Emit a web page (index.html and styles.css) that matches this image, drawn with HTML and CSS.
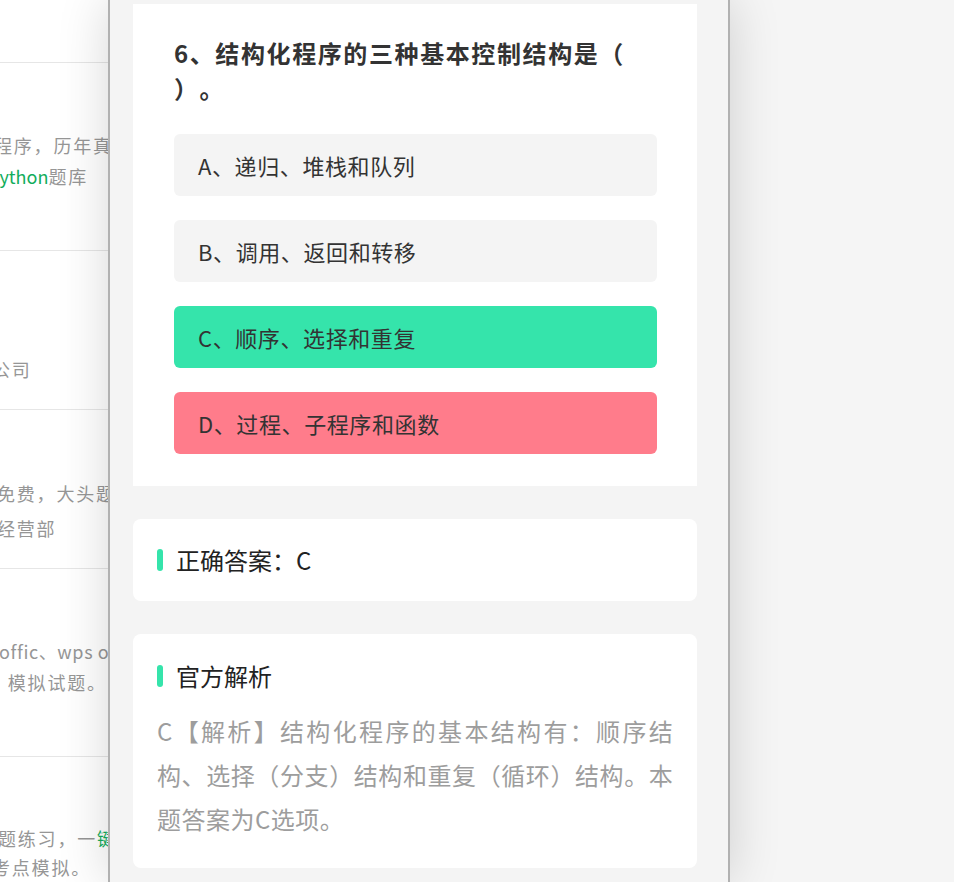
FILE: index.html
```html
<!DOCTYPE html>
<html lang="zh-CN">
<head>
<meta charset="utf-8">
<title>结构化程序</title>
<link rel="stylesheet" href="styles.css">
</head>
<body>
<div class="layout">
  <aside class="bg-list">
    <div class="list-top"></div>
    <div class="item item-tall">
      <div class="line"><span class="shift-6">程序，历年真题</span></div>
      <div class="line"><span class="shift-12"><span class="link">Python</span>题库</span></div>
    </div>
    <div class="item item-short">
      <div class="line"><span class="shift-8">公司</span></div>
    </div>
    <div class="item item-short item-loose">
      <div class="line"><span class="shift-3">免费，大头题</span></div>
      <div class="line"><span class="shift-3">经营部</span></div>
    </div>
    <div class="item item-tall">
      <div class="line latin"><span class="shift-1">offic、wps office</span></div>
      <div class="line"><span class="shift-12">、模拟试题。</span></div>
    </div>
    <div class="item item-last">
      <div class="line"><span class="shift-2">题练习，一<span class="link">键</span></span></div>
      <div class="line"><span class="shift-8">考点模拟。</span></div>
    </div>
  </aside>

  <main class="drawer">
    <section class="question-card">
      <h2 class="q-title">6、结构化程序的三种基本控制结构是（ ）。</h2>
      <div class="options">
        <div class="option">A、递归、堆栈和队列</div>
        <div class="option">B、调用、返回和转移</div>
        <div class="option option-right">C、顺序、选择和重复</div>
        <div class="option option-wrong">D、过程、子程序和函数</div>
      </div>
    </section>

    <section class="info-card info-answer">
      <div class="info-head"><span class="bar"></span><span>正确答案：C</span></div>
    </section>

    <section class="info-card info-analysis">
      <div class="info-head"><span class="bar"></span><span>官方解析</span></div>
      <p class="analysis"><span class="a-line a-full">C【解析】结构化程序的基本结构有：顺序结</span><span class="a-line a-full">构、选择（分支）结构和重复（循环）结构。本</span><span class="a-line">题答案为C选项。</span></p>
    </section>
  </main>

  <div class="right-area"></div>
</div>
</body>
</html>
```

FILE: styles.css
```css
* { box-sizing: border-box; }

html, body {
  margin: 0;
  padding: 0;
  height: 100%;
}

body {
  font-family: "Noto Sans CJK SC", "Noto Sans", sans-serif;
  background: #f5f5f5;
  overflow: hidden;
  text-spacing-trim: space-all;
}

.layout {
  display: flex;
  height: 882px;
  overflow: hidden;
}

/* background page on the left */
.bg-list {
  flex: 0 0 108px;
  width: 108px;
  background: #fff;
  overflow: hidden;
  color: #969696;
  font-size: 18px;
  letter-spacing: 1.8px;
  line-height: 31px;
  white-space: nowrap;
}

.list-top { height: 62px; }

.item {
  display: flex;
  flex-direction: column;
  justify-content: flex-end;
  border-top: 1px solid #e6e6e6;
}

.item-tall { height: 188px; padding-bottom: 58px; }
.item-short { height: 159px; padding-bottom: 24px; }
.item-loose { line-height: 35px; padding-bottom: 22px; }
.item-last { height: 150px; justify-content: flex-start; padding-top: 67px; line-height: 29px; }

.latin { letter-spacing: 0.6px; }

.shift-1 { margin-left: -1px; }
.shift-2 { margin-left: -2px; }
.shift-3 { margin-left: -3px; }
.shift-6 { margin-left: -6px; }
.shift-8 { margin-left: -8px; }
.shift-12 { margin-left: -12px; }

.link { color: #12ad5c; letter-spacing: 0; }

/* drawer panel */
.drawer {
  position: relative;
  z-index: 2;
  flex: 0 0 622px;
  width: 622px;
  background: #f4f4f4;
  border-left: 2px solid #b1b1b1;
  border-right: 2px solid #b1b1b1;
  box-shadow: 0 0 48px rgba(0, 0, 0, 0.16);
  padding: 4px 31px 0 23px;
  display: flex;
  flex-direction: column;
  gap: 33px;
}

.question-card {
  background: #fff;
  padding: 31px 40px 32px 41px;
}

.q-title {
  margin: 0 0 29px;
  font-size: 24px;
  font-weight: 700;
  line-height: 35px;
  letter-spacing: 1.6px;
  color: #333;
}

.options {
  display: flex;
  flex-direction: column;
  gap: 24px;
}

.option {
  height: 62px;
  display: flex;
  align-items: center;
  padding: 0 24px;
  border-radius: 6px;
  background: #f4f4f4;
  color: #333;
  font-size: 22px;
  letter-spacing: 0.6px;
}

.option-right { background: #35e4ab; }
.option-wrong { background: #ff7c8b; }

.info-card {
  background: #fff;
  border-radius: 8px;
  padding: 23px 24px;
}

.info-analysis { padding: 24px 24px 27px; }

.info-head {
  display: flex;
  align-items: center;
  gap: 13px;
  font-size: 24px;
  line-height: 36px;
  color: #222;
}

.bar {
  flex: 0 0 6px;
  width: 6px;
  height: 22px;
  border-radius: 3px;
  background: #35e4ab;
}

.analysis {
  margin: 15px 0 0;
  font-size: 24px;
  line-height: 44px;
  letter-spacing: 0.5px;
  color: #9d9d9d;
}

.a-line {
  display: block;
  white-space: nowrap;
}

.a-full {
  letter-spacing: 0.2px;
  text-align: justify;
  text-align-last: justify;
}

.right-area {
  flex: 1 1 auto;
  background: #f5f5f5;
}
```
